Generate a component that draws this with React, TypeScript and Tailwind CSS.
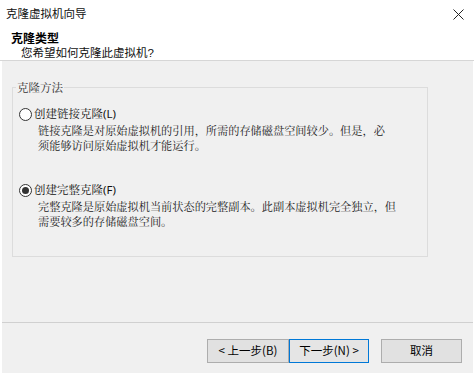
import React from 'react';

const sans = { fontFamily: '"Noto Sans CJK SC", "Noto Sans", sans-serif' };
const head = { fontFamily: '"Liberation Sans", "Noto Sans CJK SC", sans-serif' };
const song = { fontFamily: '"Noto Serif CJK SC", "Noto Sans CJK SC", serif' };
const mixed = { fontFamily: '"Noto Sans", "Noto Serif CJK SC", serif' };

function Radio({ checked }: { checked?: boolean }) {
  return (
    <span className="flex h-[13px] w-[13px] shrink-0 items-center justify-center rounded-full border border-[#333333] bg-white">
      {checked && <span className="h-[7px] w-[7px] rounded-full bg-[#333333]" />}
    </span>
  );
}

function Option({ label, checked, lines }: { label: string; checked?: boolean; lines: string[] }) {
  return (
    <div>
      <div className="flex h-[16px] items-center gap-[2px]">
        <Radio checked={checked} />
        <span className="text-[11.5px] leading-[16px] text-[#111]" style={mixed}>
          {label}
        </span>
      </div>
      <div className="ml-[19px] mt-[1px] text-[11.2px] leading-[15px] text-[#222]" style={song}>
        {lines.map((l) => (
          <div key={l}>{l}</div>
        ))}
      </div>
    </div>
  );
}

export default function App() {
  return (
    <div className="flex h-[375px] w-[474px] flex-col bg-white text-black" style={sans}>
      <div className="flex h-[28px] items-center justify-between pl-[6px] pr-[10px]">
        <span className="text-[11.5px] text-[#111]">克隆虚拟机向导</span>
        <svg width="11" height="11" viewBox="0 0 11 11" className="text-[#222]">
          <path d="M0.5 0.5L10.5 10.5M10.5 0.5L0.5 10.5" stroke="currentColor" strokeWidth="1" />
        </svg>
      </div>

      <div className="h-[33px] border-b border-[#d6d6d6] pl-[11px]" style={head}>
        <div className="mt-[4px] text-[12px] font-bold leading-[14px]">克隆类型</div>
        <div className="pl-[10px] text-[11.5px] leading-[14px] text-[#111]">您希望如何克隆此虚拟机?</div>
      </div>

      <div className="ml-[2px] mr-[1px] h-[261px] bg-[#f0f0f0] pt-[18px]">
        <fieldset className="ml-[10px] h-[178px] w-[416px] border border-[#dcdcdc] p-0">
          <legend className="ml-[3px] px-[1px] text-[11.5px] leading-[16px] text-[#333]" style={song}>
            克隆方法
          </legend>
          <div className="flex flex-col gap-[29px] pl-[6px] pt-[11px]">
            <Option
              label="创建链接克隆(L)"
              lines={[
                '链接克隆是对原始虚拟机的引用，所需的存储磁盘空间较少。但是，必',
                '须能够访问原始虚拟机才能运行。',
              ]}
            />
            <Option
              label="创建完整克隆(F)"
              checked
              lines={[
                '完整克隆是原始虚拟机当前状态的完整副本。此副本虚拟机完全独立，但',
                '需要较多的存储磁盘空间。',
              ]}
            />
          </div>
        </fieldset>
      </div>

      <div className="ml-[2px] mr-[1px] h-[51px] border-t border-[#d0d0d0] bg-[#f0f0f0]">
        <div className="flex justify-end pr-[11px] pt-[16px] text-[11.5px]">
          <button className="h-[24px] w-[82px] border border-[#adadad] bg-[#e1e1e1]">&lt; 上一步(B)</button>
          <button className="h-[24px] w-[80px] border border-[#0078d7] bg-[#e5e5e5]">下一步(N) &gt;</button>
          <button className="ml-[12px] h-[24px] w-[81px] border border-[#adadad] bg-[#e1e1e1]">取消</button>
        </div>
      </div>
    </div>
  );
}
